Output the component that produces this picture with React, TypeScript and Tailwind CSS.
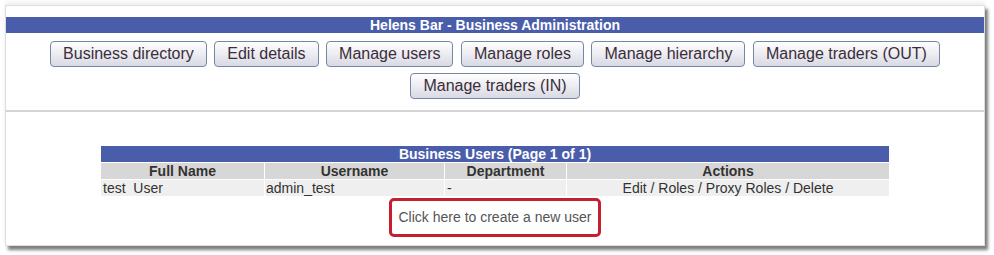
const buttons = [
  'Business directory',
  'Edit details',
  'Manage users',
  'Manage roles',
  'Manage hierarchy',
  'Manage traders (OUT)',
  'Manage traders (IN)',
];

const users = [
  { fullName: 'test  User', username: 'admin_test', department: '-' },
];

export default function App() {
  return (
    <div className="h-[255px] w-[994px] bg-white pl-[5px] pt-[5px] font-['Liberation_Sans',Arial,sans-serif]">
      <div className="flex h-[241px] w-[980px] flex-col border border-[#dedede] bg-white shadow-[3px_4px_3px_rgba(0,0,0,0.5),0_-3px_4px_rgba(0,0,0,0.07)]">
        <div className="mt-[11px] bg-[#4a5dab] text-center text-[14px] font-bold leading-[16px] text-white">
          Helens Bar - Business Administration
        </div>

        <div className="mx-auto mt-[8px] flex w-[900px] flex-wrap justify-center gap-x-[7.5px] gap-y-[6px]">
          {buttons.map((label) => (
            <AdminButton key={label} label={label} />
          ))}
        </div>

        <div className="mt-[11px] h-[2px] bg-[#d4d4d4]" />

        <div className="mt-[33px] flex flex-col items-center">
          <UsersTable />
          <div className="mt-[1px] rounded-[5px] border-[3px] border-[#c41e30] px-[7px] py-[8px] text-[14px] leading-[17px] text-[#555]">
            Click here to create a new user
          </div>
        </div>
      </div>
    </div>
  );
}

function AdminButton({ label }: { label: string }) {
  return (
    <button className="h-[26px] rounded-[4px] border border-[#7686a6] bg-gradient-to-b from-[#ffffff] to-[#d9d9e4] px-[12px] text-[16px] leading-[24px] text-[#3a2e3a]">
      {label}
    </button>
  );
}

function UsersTable() {
  return (
    <table className="w-[790px] border-separate border-spacing-[1px] text-[14px] leading-[16px] text-[#333]">
      <thead>
        <tr>
          <th colSpan={4} className="bg-[#4a5dab] text-center font-bold text-white">
            Business Users (Page 1 of 1)
          </th>
        </tr>
        <tr className="bg-[#d7d7d7]">
          <th className="w-[163px] text-center font-bold">Full Name</th>
          <th className="w-[179px] text-center font-bold">Username</th>
          <th className="w-[121px] text-center font-bold">Department</th>
          <th className="text-center font-bold">Actions</th>
        </tr>
      </thead>
      <tbody>
        {users.map((user) => (
          <tr key={user.username} className="bg-[#efefef]">
            <td className="whitespace-pre pl-[2px]">{user.fullName}</td>
            <td className="pl-[1px]">{user.username}</td>
            <td className="pl-[2px]">{user.department}</td>
            <td className="text-center">Edit / Roles / Proxy Roles / Delete</td>
          </tr>
        ))}
      </tbody>
    </table>
  );
}
